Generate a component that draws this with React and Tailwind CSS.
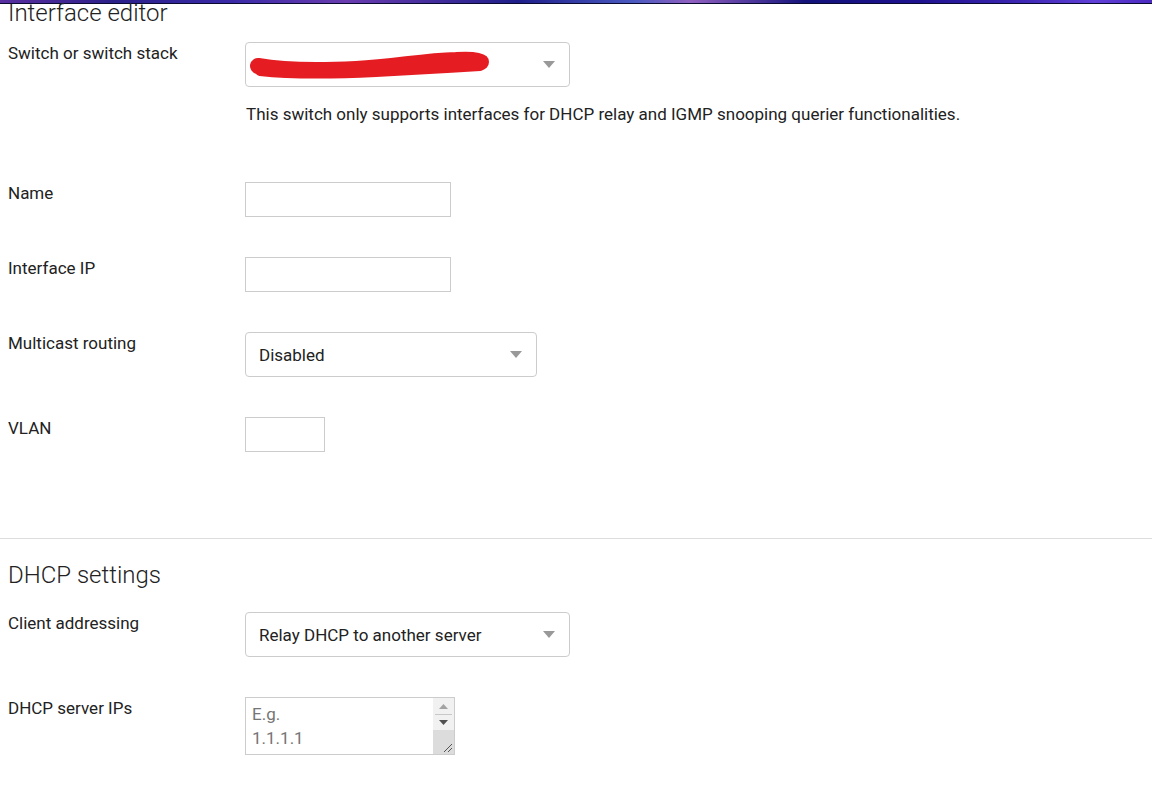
import React from "react";

function Caret() {
  return (
    <svg width="12" height="7" viewBox="0 0 12 7" className="shrink-0">
      <path d="M0 0 L12 0 L6 7 Z" fill="#999999" />
    </svg>
  );
}

function Label({ children }) {
  return (
    <div className="w-[245px] shrink-0 pl-2 text-[17px] leading-[23px] text-[#222]">
      {children}
    </div>
  );
}

function Select({ width, children }) {
  return (
    <div
      className="h-[45px] border border-[#cccccc] rounded-[4px] bg-white flex items-center pl-[13px] pr-[14px] justify-between"
      style={{ width }}
    >
      <span className="text-[17px] text-[#222] leading-none pt-[2px]">{children}</span>
      <Caret />
    </div>
  );
}

function Input({ width }) {
  return <div className="h-[35px] border border-[#cccccc] bg-white" style={{ width }} />;
}

function Scribble() {
  return (
    <svg width="250" height="34" viewBox="0 0 250 34" className="block">
      <path
        d="M12 19 C 40 24, 70 24, 110 22 C 150 20, 175 14, 210 13 C 225 12, 233 13, 235 15"
        stroke="#e51d23"
        strokeWidth="16"
        strokeLinecap="round"
        fill="none"
      />
      <path
        d="M14 24 C 50 28, 90 27, 130 25 C 170 23, 200 21, 234 19"
        stroke="#e51d23"
        strokeWidth="10"
        strokeLinecap="round"
        fill="none"
      />
    </svg>
  );
}

export default function App() {
  return (
    <div className="w-[1152px] h-[796px] bg-white overflow-hidden" style={{ fontFamily: "Roboto, 'Liberation Sans', sans-serif" }}>
      <div className="h-[3px] bg-[linear-gradient(90deg,#5a2fa0_0%,#2b1f8a_10%,#3a2aa8_20%,#6a3cb0_30%,#1e1e8a_45%,#4a5ac0_55%,#9060c0_60%,#12127a_70%,#1f1290_80%,#3a24b0_88%,#6040d8_95%,#4a2ac0_100%)]" />
      <div className="h-px bg-[#0a0a30]" />

      <div className="pl-2 text-[24px] font-light leading-[26px] text-[#222] -mt-[4px]">Interface editor</div>

      <div className="flex items-start mt-[16px]">
        <Label>Switch or switch stack</Label>
        <div className="flex flex-col">
          <div className="relative w-[325px] h-[45px] border border-[#cccccc] rounded-[4px] bg-white flex items-center justify-end pr-[14px]">
            <div className="absolute left-[0px] top-[4px]">
              <Scribble />
            </div>
            <Caret />
          </div>
          <div className="mt-[16px] text-[17px] leading-[23px] text-[#222] pl-px whitespace-nowrap">
            This switch only supports interfaces for DHCP relay and IGMP snooping querier functionalities.
          </div>
        </div>
      </div>

      <div className="flex items-start mt-[56px]">
        <Label>Name</Label>
        <Input width={206} />
      </div>

      <div className="flex items-start mt-[40px]">
        <Label>Interface IP</Label>
        <Input width={206} />
      </div>

      <div className="flex items-start mt-[40px]">
        <Label>Multicast routing</Label>
        <Select width={292}>Disabled</Select>
      </div>

      <div className="flex items-start mt-[40px]">
        <Label>VLAN</Label>
        <Input width={80} />
      </div>

      <div className="h-px bg-[#dddddd] mt-[86px]" />

      <div className="pl-2 text-[24px] font-light leading-[28px] text-[#222] mt-[22px]">DHCP settings</div>

      <div className="flex items-start mt-[23px]">
        <Label>Client addressing</Label>
        <Select width={325}>Relay DHCP to another server</Select>
      </div>

      <div className="flex items-start mt-[40px]">
        <Label>DHCP server IPs</Label>
        <div className="w-[210px] h-[58px] border border-[#cccccc] bg-white flex">
          <div className="flex-1 pl-[6px] pt-[4px] text-[17px] leading-[24px] text-[#757575]">
            <div>E.g.</div>
            <div>1.1.1.1</div>
          </div>
          <div className="w-[21px] bg-[#f1f1f1] flex flex-col">
            <div className="h-[16px] flex items-center justify-center">
              <svg width="9" height="5" viewBox="0 0 9 5"><path d="M0 5 L9 5 L4.5 0 Z" fill="#a3a3a3" /></svg>
            </div>
            <div className="h-px bg-[#c8c8c8] mx-[2px]" />
            <div className="h-[15px] flex items-center justify-center">
              <svg width="9" height="5" viewBox="0 0 9 5"><path d="M0 0 L9 0 L4.5 5 Z" fill="#505050" /></svg>
            </div>
            <div className="flex-1 bg-[#dcdcdc] relative">
              <svg width="21" height="24" viewBox="0 0 21 24" className="absolute inset-0">
                <path d="M11 22 L19 14 M15 22 L19 18" stroke="#555" strokeWidth="1" />
              </svg>
            </div>
          </div>
        </div>
      </div>
    </div>
  );
}
